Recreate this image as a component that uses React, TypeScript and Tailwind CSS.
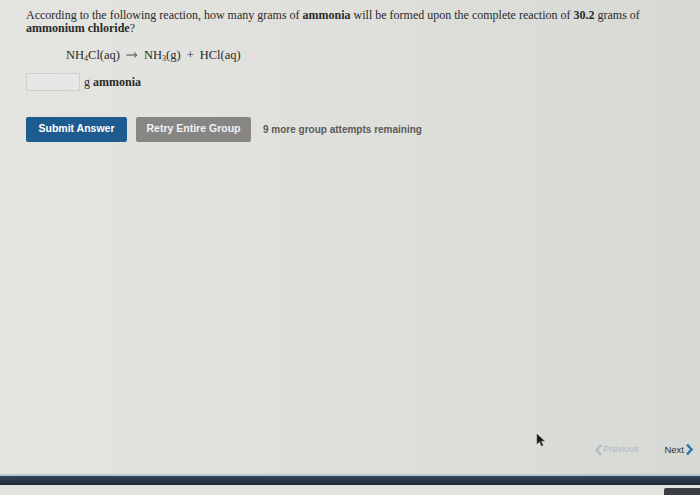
import React from 'react';

const serif = { fontFamily: '"Liberation Serif", "Times New Roman", serif' };
const sans = { fontFamily: '"Liberation Sans", Arial, sans-serif' };

function Cursor() {
  return (
    <svg className="absolute left-[536px] top-[433px]" width="10" height="14" viewBox="0 0 10 14">
      <path d="M1 1 L1 11 L3.5 8.5 L5.5 13 L7 12.3 L5 8 L8.5 8 Z" fill="#1a1a1a" stroke="#555" strokeWidth="0.5" />
    </svg>
  );
}

export default function App() {
  return (
    <div className="relative w-[700px] h-[495px] overflow-hidden flex flex-col bg-gradient-to-r from-[#e4e4e1] via-[#dfe0dc] to-[#d7d9d5]">
      <div className="px-[26px] pt-[9px]" style={serif}>
        <p className="text-[12px] leading-[13px] text-[#2a2a2a]">
          According to the following reaction, how many grams of <b>ammonia</b> will be formed upon the complete
          reaction of <b>30.2</b> grams of <b>ammonium chloride</b>?
        </p>

        <div className="mt-[11px] ml-[40px] text-[12.5px] text-[#2a2a2a] flex items-center gap-[3px]">
          <span>
            NH<sub className="text-[8px]">4</sub>Cl(aq)
          </span>
          <svg width="12" height="8" viewBox="0 0 12 8" className="mx-[3px]">
            <path d="M0.5 4 H10.5 M8 1.5 L10.8 4 L8 6.5" fill="none" stroke="#333" strokeWidth="0.9" />
          </svg>
          <span>
            NH<sub className="text-[8px]">3</sub>(g)
          </span>
          <span className="mx-[3px]">+</span>
          <span>HCl(aq)</span>
        </div>

        <div className="mt-[8px] flex items-center gap-[4px]">
          <div className="w-[54px] h-[18px] border border-[#cfd0cd] bg-[#e6e7e4]" />
          <span className="text-[12px] text-[#2a2a2a]">
            g <b>ammonia</b>
          </span>
        </div>
      </div>

      <div className="mt-[26px] px-[26px] flex items-center" style={sans}>
        <button className="w-[101px] h-[25px] rounded-[2px] bg-[#1e5b8f] text-white text-[10.5px] font-bold">
          Submit Answer
        </button>
        <button className="ml-[9px] w-[115px] h-[25px] rounded-[2px] bg-[#878685] text-[#f2f2f2] text-[10.5px] font-bold">
          Retry Entire Group
        </button>
        <span className="ml-[12px] text-[10px] font-bold text-[#5a5a5a]">9 more group attempts remaining</span>
      </div>

      <div className="flex-1" />

      <div className="flex items-center justify-end pr-[6px] pb-[17px] gap-[26px]" style={sans}>
        <div className="flex items-center text-[#aab9c2]">
          <svg width="7" height="12" viewBox="0 0 7 12">
            <path d="M6 1 L1.5 6 L6 11" fill="none" stroke="#a9bcc6" strokeWidth="2" />
          </svg>
          <span className="text-[9px] ml-[1px]">Previous</span>
        </div>
        <div className="flex items-center">
          <span className="text-[9.5px] text-[#333]">Next</span>
          <svg width="9" height="13" viewBox="0 0 9 13" className="ml-[1px]">
            <path d="M2 1.5 L6.5 6.5 L2 11.5" fill="none" stroke="#2b78ad" strokeWidth="2.6" />
          </svg>
        </div>
      </div>

      <div className="h-[2px] bg-[#b7c6cf]" />
      <div className="h-[9px] bg-gradient-to-b from-[#33495a] to-[#1c2731]" />
      <div className="h-[10px] bg-[#e2e3df] flex justify-end">
        <div className="mt-[3px] w-[36px] h-[7px] bg-[#3a3d40] rounded-tl-[2px]" />
      </div>

      <Cursor />
    </div>
  );
}
